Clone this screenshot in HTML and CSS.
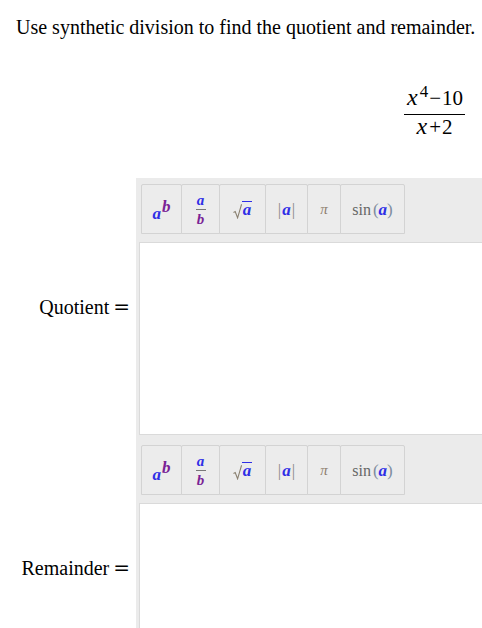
FILE: index.html
```html
<!DOCTYPE html>
<html>
<head>
<meta charset="utf-8">
<link rel="stylesheet" href="styles.css">
</head>
<body>
<p class="title">Use synthetic division to find the quotient and remainder.</p>
<div class="problem">
  <span class="frac">
    <span class="num"><i class="v">x</i><span class="sup">4</span><span class="minus">−</span>10</span>
    <span class="den"><i class="v">x</i><span class="plus">+</span>2</span>
  </span>
</div>
<div class="answers">
  <div class="label">Quotient <span class="eq">=</span></div>
  <div class="panel">
    <div class="toolbar">
      <div class="btn w1"><span class="ia">a</span><span class="ib sup-b">b</span></div>
      <div class="btn w2"><span class="mfrac"><span class="ia">a</span><span class="mbar"></span><span class="ib">b</span></span></div>
      <div class="btn w3"><svg class="rad" width="9" height="15" viewBox="0 0 9 15"><path d="M0.5 8.5 L2.2 7.6 L4.6 13.8 L8.4 0.8 L9 0.8" fill="none" stroke="#8a8070" stroke-width="1.1"/></svg><span class="ia over">a</span></div>
      <div class="btn w4"><span class="bar">|</span><span class="ia">a</span><span class="bar">|</span></div>
      <div class="btn w5"><span class="pi">π</span></div>
      <div class="btn w6"><span class="sin">sin</span><span class="par">(</span><span class="ia">a</span><span class="par">)</span></div>
    </div>
    <div class="input"></div>
  </div>
  <div class="label">Remainder <span class="eq">=</span></div>
  <div class="panel">
    <div class="toolbar">
      <div class="btn w1"><span class="ia">a</span><span class="ib sup-b">b</span></div>
      <div class="btn w2"><span class="mfrac"><span class="ia">a</span><span class="mbar"></span><span class="ib">b</span></span></div>
      <div class="btn w3"><svg class="rad" width="9" height="15" viewBox="0 0 9 15"><path d="M0.5 8.5 L2.2 7.6 L4.6 13.8 L8.4 0.8 L9 0.8" fill="none" stroke="#8a8070" stroke-width="1.1"/></svg><span class="ia over">a</span></div>
      <div class="btn w4"><span class="bar">|</span><span class="ia">a</span><span class="bar">|</span></div>
      <div class="btn w5"><span class="pi">π</span></div>
      <div class="btn w6"><span class="sin">sin</span><span class="par">(</span><span class="ia">a</span><span class="par">)</span></div>
    </div>
    <div class="input"></div>
  </div>
</div>
</body>
</html>
```

FILE: styles.css
```css
html { overflow: hidden; }
body {
  margin: 0;
  font-family: "Liberation Serif", "Times New Roman", serif;
  color: #000;
  background: #fff;
}
.title {
  margin: 16px 0 0 16px;
  font-size: 20px;
  line-height: 23px;
}
.problem {
  display: flex;
  justify-content: flex-end;
  padding-right: 17px;
  margin-top: 44px;
  height: 95px;
}
.frac {
  display: inline-flex;
  flex-direction: column;
  align-items: center;
  align-self: flex-start;
  font-family: "Liberation Serif", serif;
  font-size: 21px;
}
.num {
  display: block;
  padding: 0 2px 0 3px;
  line-height: 28px;
  border-bottom: 1.5px solid #000;
}
.den {
  display: block;
  line-height: 22px;
}
.v {
  font-style: italic;
  font-size: 24px;
  margin-right: 1px;
}
.sup {
  font-size: 17px;
  position: relative;
  top: -8px;
  margin-left: 1px;
}
.minus, .plus { margin: 0 1px; }
.answers {
  display: grid;
  grid-template-columns: 136px 1fr;
}
.label {
  display: flex;
  align-items: center;
  justify-content: flex-end;
  padding-right: 6px;
  font-size: 20px;
  padding-bottom: 3px;
}
.eq {
  margin-left: 4px;
  font-family: "DejaVu Serif", serif;
  font-size: 20px;
}
.panel {
  background: #ebebeb;
  padding: 6px 0 4px 3px;
}
.toolbar {
  display: flex;
  margin-left: 2px;
}
.btn {
  box-sizing: border-box;
  height: 50px;
  border: 1px solid #d3d3d3;
  border-radius: 2px 2px 0 0;
  background: #ececec;
  display: flex;
  align-items: center;
  justify-content: center;
  font-family: "Liberation Serif", serif;
  font-size: 16px;
  padding-top: 1px;
}
.btn + .btn { margin-left: -1px; }
.w1 { width: 41px; }
.w2 { width: 39px; }
.w3 { width: 47px; }
.w4 { width: 43px; }
.w5 { width: 34px; }
.w6 { width: 65px; }
.ia {
  font-style: italic;
  font-weight: bold;
  color: #2f2fe6;
}
.ib {
  font-style: italic;
  font-weight: bold;
  color: #7a2395;
}
.w1 .ia { margin-top: 9px; font-size: 17px; }
.sup-b {
  align-self: flex-start;
  margin-top: 11px;
  margin-left: 1px;
  font-size: 17px;
}
.mfrac {
  display: flex;
  flex-direction: column;
  align-items: center;
  font-size: 15px;
  line-height: 14px;
}
.mbar {
  width: 10px;
  height: 1px;
  background: #777;
  margin: 2px 0 2px;
}
.rad { margin-top: 3px; }
.over {
  border-top: 1px solid #2f2fe6;
  line-height: 15px;
  padding: 0 1px;
  margin-top: -1px;
  font-size: 17px;
}
.w4 .ia { font-size: 17px; }
.bar {
  color: #8a8a8a;
  font-size: 17px;
  margin: 0 1px;
}
.pi {
  color: #8c7d6e;
  font-style: italic;
  font-size: 15px;
}
.sin { color: #666; font-size: 16px; margin-right: 2px; }
.par { color: #7f8ca0; font-size: 17px; }
.w6 .ia { font-size: 17px; }
.input {
  box-sizing: border-box;
  margin-top: 8px;
  height: 193px;
  background: #fff;
  border: 1px solid #dadada;
  border-right: none;
}
```
